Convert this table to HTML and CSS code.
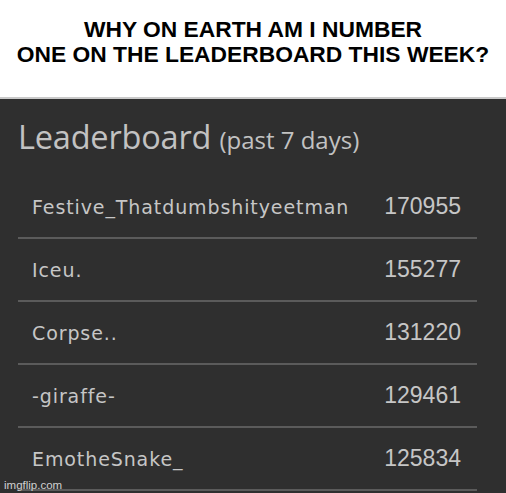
FILE: index.html
```html
<!DOCTYPE html>
<html>
<head>
<meta charset="utf-8">
<link rel="stylesheet" href="styles.css">
</head>
<body>
<div class="meme">
  <div class="caption">WHY ON EARTH AM I NUMBER<br>ONE ON THE LEADERBOARD THIS WEEK?</div>
  <div class="panel">
    <div class="title">Leaderboard <span class="sub">(past 7 days)</span></div>
    <div class="rows">
      <div class="row"><span class="name">Festive_Thatdumbshityeetman</span><span class="score">170955</span></div>
      <div class="row"><span class="name">Iceu.</span><span class="score">155277</span></div>
      <div class="row"><span class="name">Corpse..</span><span class="score">131220</span></div>
      <div class="row"><span class="name">-giraffe-</span><span class="score">129461</span></div>
      <div class="row"><span class="name">EmotheSnake_</span><span class="score">125834</span></div>
    </div>
    <div class="watermark">imgflip.com</div>
  </div>
</div>
</body>
</html>
```
FILE: styles.css
```css
html, body {
  margin: 0;
  padding: 0;
  background: #ffffff;
}
.meme {
  width: 506px;
  height: 493px;
  overflow: hidden;
  display: flex;
  flex-direction: column;
}
.caption {
  height: 97px;
  box-sizing: border-box;
  padding-top: 17px;
  text-align: center;
  font-family: "Liberation Sans", Arial, sans-serif;
  font-weight: bold;
  font-size: 22.8px;
  line-height: 25px;
  color: #000;
}
.panel {
  flex: 1;
  position: relative;
  background: #2f2f2f;
  border-top: 2px solid #c9c9c9;
  padding: 18px 29px 0 18px;
  font-family: "Open Sans", sans-serif;
}
.title {
  font-size: 32.5px;
  line-height: 40px;
  color: #c2c2c2;
  letter-spacing: -0.2px;
}
.sub {
  font-size: 24px;
  letter-spacing: 0;
}
.rows {
  margin-top: 16px;
  display: flex;
  flex-direction: column;
}
.row {
  height: 61px;
  border-bottom: 2px solid #5b5b5b;
  display: flex;
  align-items: center;
  justify-content: space-between;
  padding: 0 16px 0 14px;
  color: #c6c6c6;
  font-family: "DejaVu Sans", sans-serif;
  font-size: 19px;
}
.name {
  letter-spacing: 0.9px;
}
.score {
  font-family: "Liberation Sans", Arial, sans-serif;
  font-size: 23px;
}
.watermark {
  position: absolute;
  left: 4px;
  bottom: 2px;
  font-family: "Liberation Sans", Arial, sans-serif;
  font-size: 11.5px;
  color: #cfcfcf;
}
```
